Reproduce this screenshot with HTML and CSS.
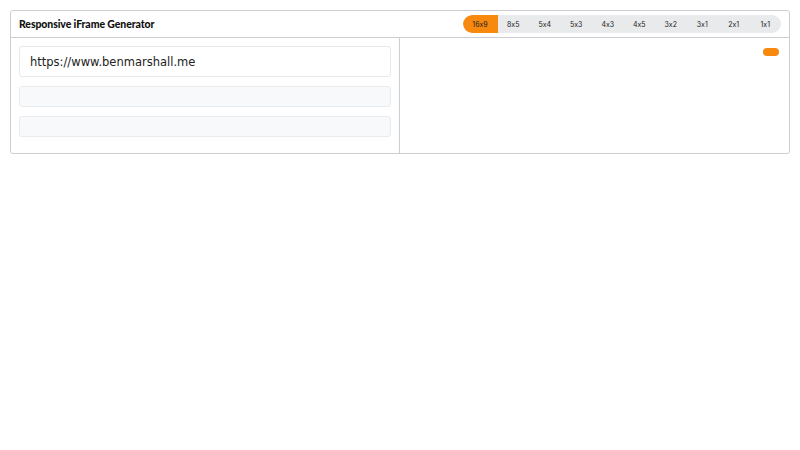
FILE: index.html
```html
<!doctype html>
<html lang="en">
<head>
  <meta charset="utf-8"/>
  <title>Responsive iFrame Generator</title>
  <link rel="stylesheet" href="styles.css">
</head>
<body>
<div class="card">
  <div class="card-head">
    <h1>Responsive iFrame Generator</h1>
    <div class="ratios">
      <button class="active">16x9</button>
      <button>8x5</button>
      <button>5x4</button>
      <button>5x3</button>
      <button>4x3</button>
      <button>4x5</button>
      <button>3x2</button>
      <button>3x1</button>
      <button>2x1</button>
      <button>1x1</button>
    </div>
  </div>
  <div class="card-body">
    <div class="form">
      <input type="text" class="url" value="https://www.benmarshall.me"/>
      <div class="field"></div>
      <div class="field"></div>
    </div>
    <div class="preview">
      <span class="copy"></span>
    </div>
  </div>
</div>
</body>
</html>
```

FILE: styles.css
```css
:root{
  --orange:#f7890f;--line:#cbced2;--pill:#e9eaec;
}
body{margin:10px;font-family:'DejaVu Sans',sans-serif;color:#212529;}
.card{border:1px solid var(--line);border-radius:3px;background:#fff}
.card-head{display:flex;align-items:center;justify-content:space-between;
  height:26px;padding:0 8px;border-bottom:1px solid var(--line)}
h1{margin:0;font-family:'Lato','Inter',sans-serif;font-weight:900;font-size:10.5px;
  color:#111;letter-spacing:-.1px}
.ratios{display:flex;background:var(--pill);border-radius:9px;height:18px;overflow:hidden}
.ratios button{border:none;background:none;padding:0;width:31.5px;height:18px;
  font-family:'Inter',sans-serif;font-size:7px;color:#222;cursor:pointer;
  font-feature-settings:"calt" 0}
.ratios button.active{background:var(--orange);width:35px;border-radius:9px 0 0 9px}
.card-body{display:grid;grid-template-columns:1fr 1fr;height:115px}
.form{min-width:0;padding:8px 8px 0 8px;border-right:1px solid var(--line)}
.url{display:block;box-sizing:border-box;width:100%;height:31px;padding:0 10px;
  border:1px solid #e6e8eb;border-radius:3px;font-family:'DejaVu Sans',sans-serif;
  font-size:11.5px;color:#222;background:#fff}
.field{box-sizing:border-box;height:21px;margin-top:9px;background:#f8f9fa;
  border:1px solid #e9ecef;border-radius:3px}
.preview{min-width:0;position:relative}
.copy{position:absolute;top:10px;right:10px;width:16px;height:8px;border-radius:4px;
  background:var(--orange)}
```
